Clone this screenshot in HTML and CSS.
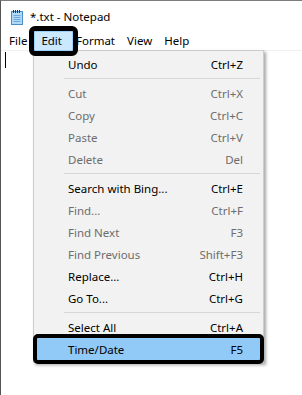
FILE: index.html
```html
<!DOCTYPE html>
<html lang="en">

<head>
    <title>*.txt - Notepad</title>
    <link rel="stylesheet" href="styles.css">
</head>

<body>
    <div class="window">
        <div class="titlebar">
            <svg class="app-icon" width="16" height="16" viewBox="0 0 16 16">
                <rect x="2.5" y="2.5" width="11" height="13" fill="#b3daf4" stroke="#4a8cc4" />
                <path d="M4.5 6.5h7M4.5 8.5h7M4.5 10.5h7M4.5 12.5h7" stroke="#6aa8dc" />
                <path d="M4.5 1v3M6.5 1v3M8.5 1v3M10.5 1v3" stroke="#333" />
            </svg>
            <span class="title">*.txt - Notepad</span>
        </div>
        <div class="menubar">
            <span class="menu-item">File</span>
            <span class="menu-item open">Edit</span>
            <span class="menu-item after-open">Format</span>
            <span class="menu-item">View</span>
            <span class="menu-item">Help</span>
        </div>
        <div class="editor">
            <span class="caret"></span>
        </div>

        <div class="dropdown">
            <div class="row"><span>Undo</span><span>Ctrl+Z</span></div>
            <div class="sep"></div>
            <div class="row disabled"><span>Cut</span><span>Ctrl+X</span></div>
            <div class="row disabled"><span>Copy</span><span>Ctrl+C</span></div>
            <div class="row disabled"><span>Paste</span><span>Ctrl+V</span></div>
            <div class="row disabled"><span>Delete</span><span>Del</span></div>
            <div class="sep"></div>
            <div class="row"><span>Search with Bing...</span><span>Ctrl+E</span></div>
            <div class="row disabled"><span>Find...</span><span>Ctrl+F</span></div>
            <div class="row disabled"><span>Find Next</span><span>F3</span></div>
            <div class="row disabled"><span>Find Previous</span><span>Shift+F3</span></div>
            <div class="row"><span>Replace...</span><span>Ctrl+H</span></div>
            <div class="row"><span>Go To...</span><span>Ctrl+G</span></div>
            <div class="sep"></div>
            <div class="row"><span>Select All</span><span>Ctrl+A</span></div>
            <div class="row selected"><span>Time/Date</span><span>F5</span></div>
        </div>
    </div>
</body>

</html>
```

FILE: styles.css
```css
body,
html {
    margin: 0;
    padding: 0;
    height: 100%;
    background: #fff;
    font-family: "Noto Sans", "Liberation Sans", sans-serif;
    font-size: 11.5px;
    color: #000;
}

.window {
    position: relative;
    height: 100%;
    box-sizing: border-box;
    border-top: 1px solid #7c7c7c;
    border-left: 1px solid #555;
}

.titlebar {
    display: flex;
    align-items: center;
    height: 29px;
    padding-left: 8px;
    padding-top: 1px;
    box-sizing: border-box;
    gap: 5px;
}

.app-icon {
    margin-top: 1px;
}

.menubar {
    display: flex;
    align-items: center;
    height: 21px;
    padding: 2px 0 0 1px;
    box-sizing: border-box;
    border-bottom: 1px solid #f0f0f0;
}

.menu-item {
    padding: 0 5px;
    line-height: 18px;
    border: 1px solid transparent;
}

.menu-item:first-child {
    padding: 0 6px;
}

.menu-item.open {
    padding: 0 10px 0 6px;
    background: #cce8ff;
    border-color: #99d1ff;
    outline: 5px solid #000;
    border-radius: 1px;
    position: relative;
    z-index: 2;
}

.menu-item.after-open {
    padding-left: 2px;
}

.editor {
    padding: 1px 4px;
}

.caret {
    display: block;
    width: 1px;
    height: 16px;
    background: #000;
}

/* dropdown sits over the editor */
.dropdown {
    position: absolute;
    left: 32px;
    top: 49px;
    width: 223px;
    padding: 2px 3px;
    background: #f2f2f2;
    border: 1px solid #cccccc;
    box-shadow: 2px 2px 3px rgba(0, 0, 0, 0.35);
    z-index: 1;
}

.row {
    display: flex;
    justify-content: space-between;
    align-items: center;
    height: 22px;
    padding: 0 17px 0 31px;
}

.row.disabled {
    color: #6d6d6d;
}

.row.selected {
    background: #91c9f7;
    outline: 4px solid #000;
    border-radius: 1px;
}

.sep {
    height: 1px;
    margin: 3px 0 3px 27px;
    background: #d7d7d7;
}
```
